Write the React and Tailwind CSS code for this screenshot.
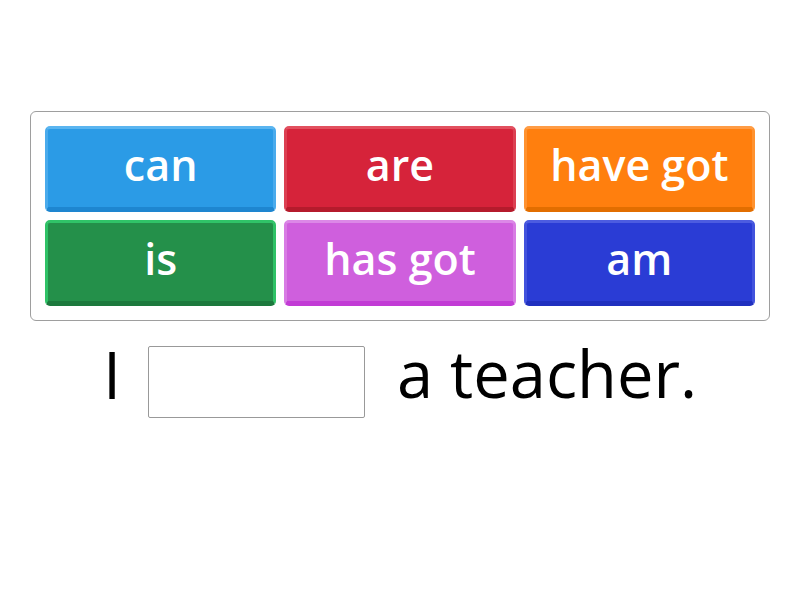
import React from "react";

const tiles = [
  { word: "can", face: "bg-[#2b9be6]", edge: "border-t-[#5ab5f0] border-x-[#4aabec] border-b-[#1e86d0]" },
  { word: "are", face: "bg-[#d6233a]", edge: "border-t-[#e2505f] border-x-[#dc4052] border-b-[#b51b2c]" },
  { word: "have got", face: "bg-[#ff7f0e]", edge: "border-t-[#ff9c45] border-x-[#ff922f] border-b-[#e26e00]" },
  { word: "is", face: "bg-[#24904a]", edge: "border-t-[#30c468] border-x-[#2fc266] border-b-[#1c793d]" },
  { word: "has got", face: "bg-[#cf5fdd]", edge: "border-t-[#dc88e7] border-x-[#d87ce4] border-b-[#c23bd5]" },
  { word: "am", face: "bg-[#2a3cd5]", edge: "border-t-[#4c5ce0] border-x-[#4253dd] border-b-[#2030bf]" },
];

function Tile({ word, face, edge }) {
  return (
    <div
      className={`h-[86px] rounded-[5px] border-t-[3px] border-x-[3px] border-b-[5px] ${edge} ${face} flex items-center justify-center`}
    >
      <span className="text-white text-[43px] font-semibold leading-none pb-[7px] font-['Open_Sans',sans-serif]">
        {word}
      </span>
    </div>
  );
}

export default function App() {
  return (
    <div className="w-[800px] h-[600px] bg-white pt-[111px] px-[30px] font-['Open_Sans',sans-serif]">
      <div className="border border-[#9e9e9e] rounded-[6px] p-[14px] grid grid-cols-3 gap-2">
        {tiles.map((t) => (
          <Tile key={t.word} {...t} />
        ))}
      </div>
      <div className="mt-[20px] flex items-center justify-center text-black text-[65px] leading-none">
        <span className="pb-[14px]">I</span>
        <div className="ml-[27px] w-[217px] h-[72px] border border-[#999999] rounded-[2px] bg-white"></div>
        <span className="ml-[32px] pb-[16px]">a teacher.</span>
      </div>
    </div>
  );
}
